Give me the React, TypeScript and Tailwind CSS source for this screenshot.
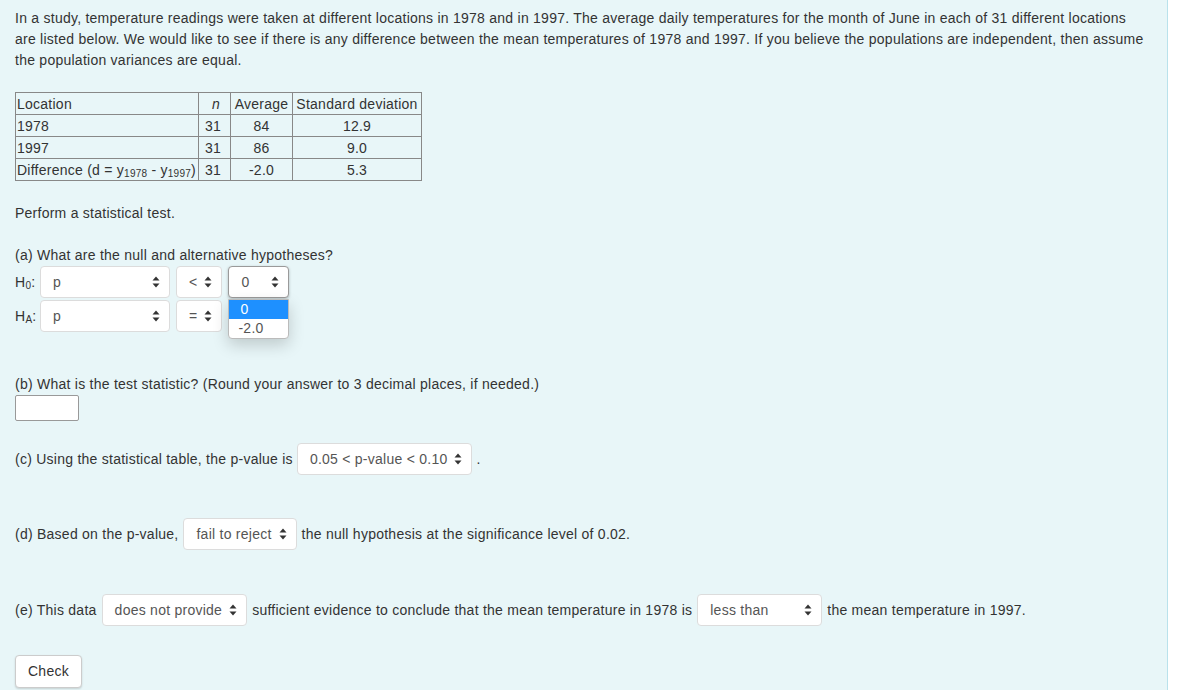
import React from 'react';

const FONT = { fontFamily: '"Liberation Sans", Arial, sans-serif', letterSpacing: '0.25px' };

function Arrows() {
  return (
    <svg width="8" height="12" viewBox="0 0 8 12" className="shrink-0">
      <path d="M4 0.5 L7.5 4.5 H0.5 Z" fill="#333" />
      <path d="M4 11.5 L7.5 7.5 H0.5 Z" fill="#333" />
    </svg>
  );
}

function Select({
  value,
  width,
  focused = false,
}: {
  value: string;
  width?: number;
  focused?: boolean;
}) {
  return (
    <div
      className={`inline-flex h-8 items-center gap-[7px] rounded-[4px] border bg-white pl-3 pr-[9px] text-[#555] ${
        width ? 'justify-between' : ''
      } ${focused ? 'border-[#9a9a9a] shadow-[0_1px_3px_rgba(0,0,0,0.25)]' : 'border-[#dcdcdc]'}`}
      style={width ? { width } : undefined}
    >
      <span className="whitespace-nowrap">{value}</span>
      <Arrows />
    </div>
  );
}

function Sub({ children }: { children: React.ReactNode }) {
  return <sub className="text-[10px] leading-none">{children}</sub>;
}

export default function App() {
  return (
    <div className="min-h-[690px] w-[1168px] border-r border-[#b9e2ec] bg-[#e8f6f8] pl-[15px] pr-[18px] pt-2 text-[14px] leading-[21px] text-[#333]" style={FONT}>
      <p>
        In a study, temperature readings were taken at different locations in 1978 and in 1997. The average daily temperatures for the month of June in each of 31 different locations are listed below. We would like to see if there is any difference between the mean temperatures of 1978 and 1997. If you believe the populations are independent, then assume the population variances are equal.
      </p>

      <table className="mt-[21px] table-fixed border-collapse text-[14px] leading-[20px]" style={{ width: 406 }}>
        <colgroup>
          <col style={{ width: 183 }} />
          <col style={{ width: 32 }} />
          <col style={{ width: 62 }} />
          <col style={{ width: 129 }} />
        </colgroup>
        <tbody>
          <tr className="h-[22px]">
            <td className="border border-[#888] px-px">Location</td>
            <td className="border border-[#888] pr-[10px] text-right italic">n</td>
            <td className="border border-[#888] text-center">Average</td>
            <td className="border border-[#888] text-center">Standard deviation</td>
          </tr>
          <tr className="h-[22px]">
            <td className="border border-[#888] px-px">1978</td>
            <td className="border border-[#888] pr-[9px] text-right">31</td>
            <td className="border border-[#888] text-center">84</td>
            <td className="border border-[#888] text-center">12.9</td>
          </tr>
          <tr className="h-[22px]">
            <td className="border border-[#888] px-px">1997</td>
            <td className="border border-[#888] pr-[9px] text-right">31</td>
            <td className="border border-[#888] text-center">86</td>
            <td className="border border-[#888] text-center">9.0</td>
          </tr>
          <tr className="h-[22px]">
            <td className="overflow-visible whitespace-nowrap border border-[#888] px-px">
              Difference (d = y<Sub>1978</Sub> - y<Sub>1997</Sub>)
            </td>
            <td className="border border-[#888] pr-[9px] text-right">31</td>
            <td className="border border-[#888] text-center">-2.0</td>
            <td className="border border-[#888] text-center">5.3</td>
          </tr>
        </tbody>
      </table>

      <p className="mt-[22px]">Perform a statistical test.</p>

      <p className="mt-[21px]">(a) What are the null and alternative hypotheses?</p>
      <div className="flex flex-col gap-[2px]">
        <div className="flex items-center">
          <span className="w-[25px]">
            H<Sub>0</Sub>:
          </span>
          <Select value="p" width={130} />
          <div className="ml-[6px]">
            <Select value="<" />
          </div>
          <div className="relative ml-[6px]">
            <Select value="0" width={61} focused />
            <div className="absolute left-0 top-[33px] z-10 w-[61px] overflow-hidden rounded-b-[4px] border border-[#bbb] bg-white text-[#555] shadow-[0_6px_16px_rgba(0,0,0,0.18)]">
              <div className="h-[19px] bg-[#1e90ff] pl-[11px] leading-[19px] text-white">0</div>
              <div className="h-[19px] pl-[9px] leading-[19px]">-2.0</div>
            </div>
          </div>
        </div>
        <div className="flex items-center">
          <span className="w-[25px]">
            H<Sub>A</Sub>:
          </span>
          <Select value="p" width={130} />
          <div className="ml-[6px]">
            <Select value="=" />
          </div>
          {/* third select of this row sits under the open list above */}
          <div className="ml-[6px] h-8 w-[61px] rounded-[4px] border border-[#dcdcdc] bg-white" />
        </div>
      </div>

      <p className="mt-[42px]">(b) What is the test statistic? (Round your answer to 3 decimal places, if needed.)</p>
      <input className="block h-[26px] w-[64px] rounded-[2px] border border-[#999] bg-white" />

      <div className="mt-[22px] flex items-center gap-[4px]">
        <span>(c) Using the statistical table, the p-value is</span>
        <Select value="0.05 < p-value < 0.10" />
        <span>.</span>
      </div>

      <div className="mt-[43px] flex items-center gap-[5px]">
        <span>(d) Based on the p-value,</span>
        <Select value="fail to reject" />
        <span>the null hypothesis at the significance level of 0.02.</span>
      </div>

      <div className="mt-[44px] flex items-center gap-[5px]">
        <span>(e) This data</span>
        <Select value="does not provide" />
        <span>sufficient evidence to conclude that the mean temperature in 1978 is</span>
        <Select value="less than" width={125} />
        <span>the mean temperature in 1997.</span>
      </div>

      <button className="mt-[29px] h-[33px] rounded-[4px] border border-[#ccc] bg-white px-3 text-[#333] shadow-[0_1px_2px_rgba(0,0,0,0.15)]">
        Check
      </button>
    </div>
  );
}
